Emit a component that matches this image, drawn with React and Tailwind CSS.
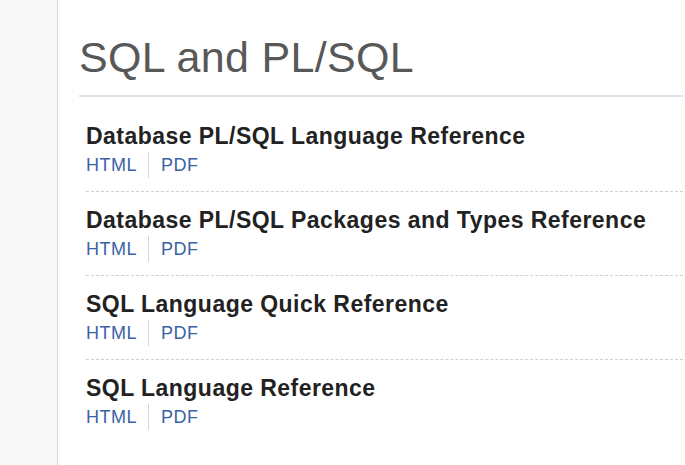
import React from "react";

const items = [
  "Database PL/SQL Language Reference",
  "Database PL/SQL Packages and Types Reference",
  "SQL Language Quick Reference",
  "SQL Language Reference",
];

export default function App() {
  return (
    <div
      className="flex w-[685px] h-[465px] bg-white overflow-hidden"
      style={{ fontFamily: '"Liberation Sans", Arial, sans-serif' }}
    >
      <div className="w-[58px] shrink-0 bg-[#f8f8f8] border-r border-[#d6d6d6]" />
      <div className="flex-1 pl-[21px] pr-[2px]">
        <h1 className="pt-[34px] pb-[14px] border-b-2 border-[#dfe4ea] text-[43px] leading-[47px] tracking-[0.3px] text-[#585858] font-normal">
          SQL and PL/SQL
        </h1>
        <div className="pt-[11px] pl-[7px]">
          {items.map((t, i) => (
            <div
              key={t}
              className={
                "pt-[16px] pb-[13px] " +
                (i < items.length - 1 ? "border-b border-dashed border-[#cfcfcf]" : "")
              }
            >
              <div className="text-[23px] leading-[24px] tracking-[0.46px] font-bold text-[#222222]">{t}</div>
              <div className="mt-[4px] flex items-center h-[26px] text-[18px] leading-[26px] tracking-[0.5px] text-[#3a63a6]">
                <span className="pr-[11px]">HTML</span>
                <span className="h-[26px] border-l border-[#d4d4d4] pl-[12px]">PDF</span>
              </div>
            </div>
          ))}
        </div>
      </div>
    </div>
  );
}
